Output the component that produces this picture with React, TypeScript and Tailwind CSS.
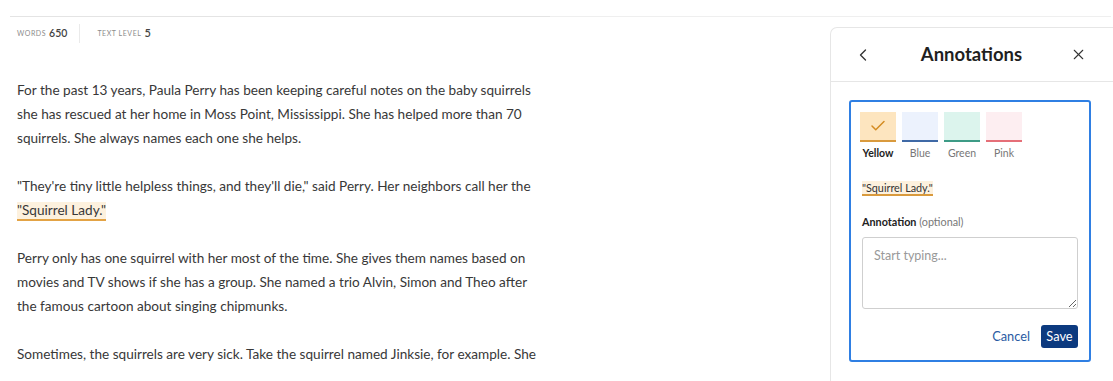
import React from 'react';
import { ChevronLeft, X, Check } from 'lucide-react';

const swatches = [
  { name: 'Yellow', bg: 'bg-[#fde5bf]', border: 'border-[#d99a3d]', active: true },
  { name: 'Blue', bg: 'bg-[#ecf2fd]', border: 'border-[#3f69a6]', active: false },
  { name: 'Green', bg: 'bg-[#dcf4ed]', border: 'border-[#3d9b86]', active: false },
  { name: 'Pink', bg: 'bg-[#fdeef1]', border: 'border-[#e56f78]', active: false },
];

const paragraphs: React.ReactNode[][] = [
  [
    'For the past 13 years, Paula Perry has been keeping careful notes on the baby squirrels',
    'she has rescued at her home in Moss Point, Mississippi. She has helped more than 70',
    'squirrels. She always names each one she helps.',
  ],
  [
    '"They\'re tiny little helpless things, and they\'ll die," said Perry. Her neighbors call her the',
    <span className="bg-[#fdf1de] border-b-2 border-[#e3a345] pb-[1px]">"Squirrel Lady."</span>,
  ],
  [
    'Perry only has one squirrel with her most of the time. She gives them names based on',
    'movies and TV shows if she has a group. She named a trio Alvin, Simon and Theo after',
    'the famous cartoon about singing chipmunks.',
  ],
  ['Sometimes, the squirrels are very sick. Take the squirrel named Jinksie, for example. She'],
];

export default function App() {
  return (
    <div className="h-[381px] w-full overflow-hidden bg-white font-['Lato',sans-serif] text-[#333]">
      {/* top rule */}
      <div className="flex pt-4 pl-[10px] pr-[2px]">
        <div className="h-px w-[540px] bg-[#e4e4e4]" />
        <div className="h-px flex-1 bg-[#efefef]" />
      </div>

      <div className="flex">
        {/* article */}
        <div className="w-[560px] pl-[17px]">
          <div className="mt-[7px] flex items-center h-[19px]">
            <span className="text-[7px] tracking-[0.08em] text-[#8c8c8c]">WORDS</span>
            <span className="ml-[3px] text-[10.5px] font-semibold text-[#444]">650</span>
            <div className="ml-[12px] mr-[17px] h-[19px] w-px bg-[#eaeaea]" />
            <span className="text-[7px] tracking-[0.08em] text-[#8c8c8c]">TEXT LEVEL</span>
            <span className="ml-[3px] text-[11px] font-semibold text-[#444]">5</span>
          </div>

          <div className="mt-[35px] text-[13.6px] leading-[24px] text-[#383838]">
            {paragraphs.map((lines, i) => (
              <p key={i} className="mb-[24px]">
                {lines.map((line, j) => (
                  <span key={j} className="block whitespace-nowrap">
                    {line}
                  </span>
                ))}
              </p>
            ))}
          </div>
        </div>

        {/* annotations panel */}
        <div className="ml-auto mt-[10px] w-[283px] shrink-0 rounded-tl-[7px] border-l border-t border-[#e6e6e6] bg-white">
          <div className="flex h-[54px] items-center justify-between border-b border-[#e6e6e6] pl-[22px] pr-[26px]">
            <ChevronLeft size={20} strokeWidth={1.6} className="text-[#333]" />
            <span className="text-[18.5px] font-bold text-[#1f1f1f]">Annotations</span>
            <X size={17} strokeWidth={1.5} className="text-[#333]" />
          </div>

          <div className="ml-[18px] mt-[18px] w-[242px] rounded-[3px] border-2 border-[#2f7fe3] px-[11px] pt-[10px] pb-[12px]">
            <div className="-ml-[2px] flex gap-[6px]">
              {swatches.map((s) => (
                <div key={s.name} className="flex w-[36px] flex-col items-center">
                  <div className={`flex h-[30px] w-[36px] items-center justify-center border-b-2 ${s.bg} ${s.border}`}>
                    {s.active && <Check size={18} strokeWidth={2} className="text-[#d48b22]" />}
                  </div>
                  <span
                    className={`mt-[5px] text-[10.5px] leading-[12px] ${
                      s.active ? 'font-bold text-[#222]' : 'text-[#777]'
                    }`}
                  >
                    {s.name}
                  </span>
                </div>
              ))}
            </div>

            <div className="mt-[22px] flex">
              <span className="border-b-2 border-[#d99a3d] bg-[#fdf1de] text-[10.8px] leading-[13px] text-[#333]">
                "Squirrel Lady."
              </span>
            </div>

            <div className="mt-[20px] text-[10.8px] leading-[12px]">
              <span className="font-bold text-[#222]">Annotation</span>{' '}
              <span className="text-[#777]">(optional)</span>
            </div>

            <textarea
              placeholder="Start typing..."
              className="mt-[9px] block h-[72px] w-full resize-y rounded-[3px] border border-[#cfcfcf] px-[11px] py-[10px] text-[12.5px] leading-[16px] text-[#333] outline-none placeholder:text-[#999]"
            />

            <div className="mt-[16px] flex items-center justify-end gap-[11px]">
              <span className="text-[12.8px] text-[#2a5ba3]">Cancel</span>
              <button className="h-[23px] w-[37px] rounded-[3px] bg-[#0c3a7f] text-[12.8px] text-white">
                Save
              </button>
            </div>
          </div>
        </div>
      </div>
    </div>
  );
}
